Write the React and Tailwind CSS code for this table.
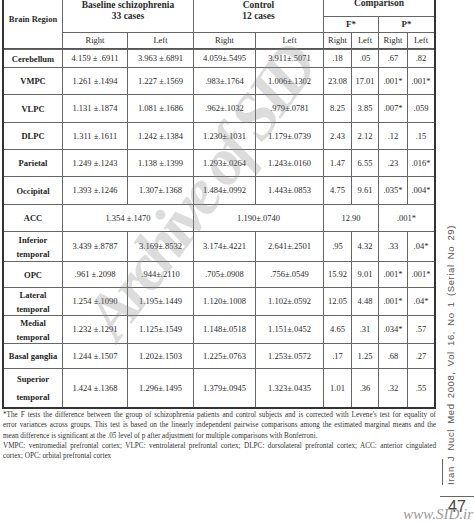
import React from "react";

const rows = [
  { name: ["Cerebellum"], v: ["4.159 ± .6911", "3.963 ±.6891", "4.059±.5495", "3.911±.5071", ".18", ".05", ".67", ".82"] },
  { name: ["VMPC"], v: ["1.261 ±.1494", "1.227 ±.1569", ".983±.1764", "1.006±.1302", "23.08", "17.01", ".001*", ".001*"] },
  { name: ["VLPC"], v: ["1.131 ±.1874", "1.081 ±.1686", ".962±.1032", ".979±.0781", "8.25", "3.85", ".007*", ".059"] },
  { name: ["DLPC"], v: ["1.311 ±.1611", "1.242 ±.1384", "1.230±.1031", "1.179±.0739", "2.43", "2.12", ".12", ".15"] },
  { name: ["Parietal"], v: ["1.249 ±.1243", "1.138 ±.1399", "1.293±.0264", "1.243±.0160", "1.47", "6.55", ".23", ".016*"] },
  { name: ["Occipital"], v: ["1.393 ±.1246", "1.307±.1368", "1.484±.0992", "1.443±.0853", "4.75", "9.61", ".035*", ".004*"] },
  { name: ["ACC"], merged: ["1.354 ±.1470", "1.190±.0740", "12.90", ".001*"] },
  { name: ["Inferior", "temporal"], v: ["3.439 ±.8787", "3.169±.8532", "3.174±.4221", "2.641±.2501", ".95", "4.32", ".33", ".04*"] },
  { name: ["OPC"], v: [".961 ±.2098", ".944±.2110", ".705±.0908", ".756±.0549", "15.92", "9.01", ".001*", ".001*"] },
  { name: ["Lateral", "temporal"], v: ["1.254 ±.1090", "1.195±.1449", "1.120±.1008", "1.102±.0592", "12.05", "4.48", ".001*", ".04*"] },
  { name: ["Medial", "temporal"], v: ["1.232 ±.1291", "1.125±.1549", "1.148±.0518", "1.151±.0452", "4.65", ".31", ".034*", ".57"] },
  { name: ["Basal ganglia"], v: ["1.244 ±.1507", "1.202±.1503", "1.225±.0763", "1.253±.0572", ".17", "1.25", ".68", ".27"] },
  { name: ["Superior", "temporal"], tall: true, v: ["1.424 ±.1368", "1.296±.1495", "1.379±.0945", "1.323±.0435", "1.01", ".36", ".32", ".55"] },
];

const cell = "flex items-center justify-center bg-white text-center whitespace-nowrap";

export default function App() {
  return (
    <div className="relative h-[523px] w-[474px] overflow-hidden bg-white font-['Liberation_Serif',serif] text-[#2b2b2b]">
      <div className="flex items-start">
        {/* TABLE + NOTES */}
        <div className="ml-[2px] w-[434px]">
          <div className="-mt-[12px] grid grid-cols-[58px_64px_65px_61px_67px_27px_26px_28px_26px] grid-rows-[26px_15px_16px_17px_26px_27px_26px_26px_27px_26px_29px_25px_27px_27px_24px_38px] gap-px border-2 border-[#333] bg-[#666] text-[8.5px] leading-[11px]">
            <div className={`${cell} row-span-3 border-b border-[#555] font-bold`}>Brain Region</div>
            <div className={`${cell} col-span-2 row-span-2 flex-col text-[9.5px] leading-[11px] font-bold`}>
              <span>Baseline schizophrenia</span>
              <span>33 cases</span>
            </div>
            <div className={`${cell} col-span-2 row-span-2 flex-col text-[9.5px] leading-[11px] font-bold`}>
              <span>Control</span>
              <span>12 cases</span>
            </div>
            <div className={`${cell} col-span-4 text-[9.5px] font-bold`}>Comparison</div>
            <div className={`${cell} col-span-2 text-[9px] font-bold`}>F*</div>
            <div className={`${cell} col-span-2 text-[9px] font-bold`}>P*</div>
            {["Right", "Left", "Right", "Left", "Right", "Left", "Right", "Left"].map((t, i) => (
              <div key={i} className={`${cell} border-b border-[#555]`}>{t}</div>
            ))}

            {rows.map((r) => (
              <React.Fragment key={r.name.join(" ")}>
                <div className={`${cell} flex-col font-bold text-[#1f1f1f] ${r.tall ? "leading-[18px]" : "leading-[14px]"}`}>
                  {r.name.map((n, i) => (
                    <span key={i}>{n}</span>
                  ))}
                </div>
                {r.merged
                  ? r.merged.map((m, i) => (
                      <div key={i} className={`${cell} col-span-2`}>{m}</div>
                    ))
                  : r.v.map((m, i) => (
                      <div key={i} className={cell}>{m}</div>
                    ))}
              </React.Fragment>
            ))}
          </div>

          {/* FOOTNOTES */}
          <div className="pt-[1px] pl-[1px] text-[7.2px] leading-[10.3px] text-[#333]">
            <p className="whitespace-nowrap text-justify [text-align-last:justify]">
              *The F tests the difference between the group of schizophrenia patients and control subjects and is corrected with Levene's test for equality of
            </p>
            <p className="whitespace-nowrap text-justify [text-align-last:justify]">
              error variances across groups. This test is based on the linearly independent pairwise comparisons among the estimated marginal means and the
            </p>
            <p className="whitespace-nowrap">
              mean difference is significant at the .05 level of p after adjustment for multiple comparisons with Bonferroni.
            </p>
            <p className="whitespace-nowrap text-justify [text-align-last:justify]">
              VMPC: ventromedial prefrontal cortex; VLPC: ventrolateral prefrontal cortex; DLPC: dorsolateral prefrontal cortex; ACC: anterior cingulated
            </p>
            <p className="whitespace-nowrap">cortex; OPC: orbital prefrontal cortex</p>
          </div>
        </div>

        {/* JOURNAL SIDE STRIP */}
        <div className="flex w-[38px] flex-col pt-[205px] font-['Liberation_Sans',Arial,sans-serif] text-[#555]">
          <div className="flex items-end pl-[6px]">
            <div className="h-[26px] w-px bg-[#666]" />
            <div className="ml-[2px] h-[280px] rotate-180 whitespace-nowrap text-[9.5px] leading-[11px] tracking-[0.6px] [word-spacing:2px] [writing-mode:vertical-rl]">
              Iran J Nucl Med 2008, Vol 16, No 1 (Serial No 29)
            </div>
          </div>
          <div className="mt-[11px] ml-[4px] border-t border-[#666] pt-[1px] pl-[8px] text-[16px] leading-[18px] text-[#444]">
            47
          </div>
        </div>
      </div>

      {/* WATERMARKS */}
      <div className="pointer-events-none absolute left-[200px] top-[192px] -translate-x-1/2 -translate-y-1/2 rotate-[-54deg] whitespace-nowrap text-[66px] font-bold italic leading-none tracking-[-5px] text-[rgba(140,140,140,0.3)]">
        Archive of SID
      </div>
      <div className="pointer-events-none absolute bottom-[1px] right-[1px] text-[15px] italic leading-none text-[#9a9a9a]">
        www.SID.ir
      </div>
    </div>
  );
}
